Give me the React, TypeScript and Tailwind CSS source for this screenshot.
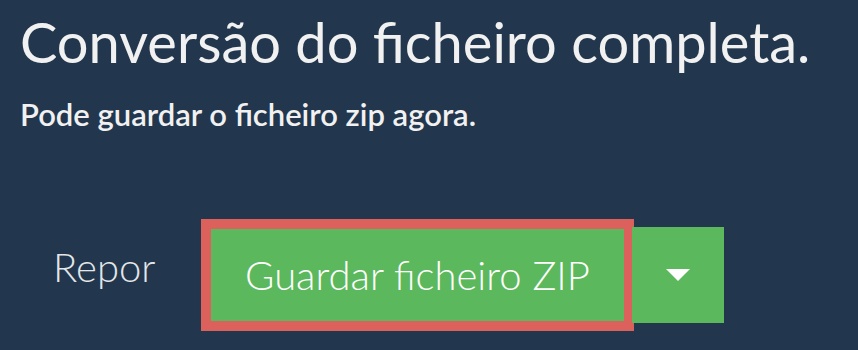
export default function App() {
  return (
    <div className="w-[858px] h-[350px] overflow-hidden bg-[#22374d] text-[#f1f1f1] font-['Lato',sans-serif]">
      <div className="pl-[20px] pt-[8px]">
        <h1 className="text-[56px] leading-[67px] font-normal">Conversão do ficheiro completa.</h1>
        <p className="mt-[21px] text-[31px] leading-[37px] font-semibold">Pode guardar o ficheiro zip agora.</p>
      </div>
      <div className="flex items-center mt-[94px] pl-[53px]">
        <button className="w-[158px] pb-[16px] text-left text-[40px] leading-[48px] font-light text-[#e4e6e8]">Repor</button>
        <div className="flex items-center">
          <button className="w-[413px] h-[92px] bg-[#5cb85c] text-white text-[40px] leading-[48px] font-light outline-[10px] outline-solid outline-[#dc615c]">
            Guardar ficheiro ZIP
          </button>
          <button className="ml-[8px] w-[92px] h-[96px] bg-[#5cb85c] flex items-center justify-center">
            <span className="block w-0 h-0 border-l-[12px] border-r-[12px] border-t-[12px] border-l-transparent border-r-transparent border-t-white"></span>
          </button>
        </div>
      </div>
    </div>
  )
}
